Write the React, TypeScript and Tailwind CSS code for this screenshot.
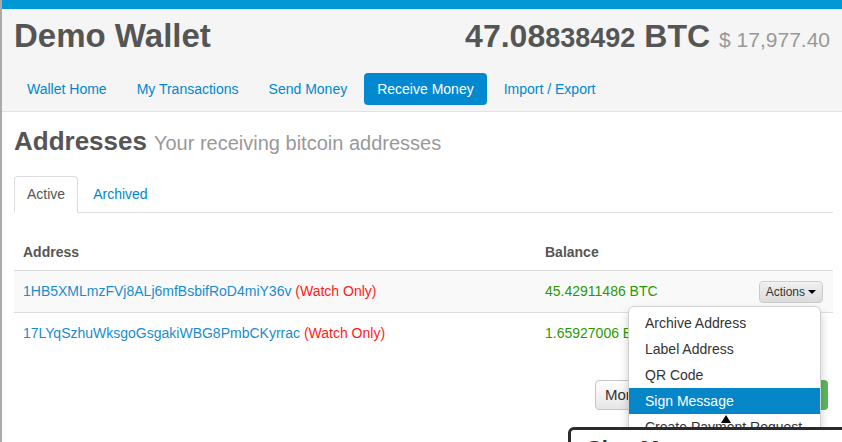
import { ReactNode } from "react";

const navItems = ["Wallet Home", "My Transactions", "Send Money", "Receive Money", "Import / Export"];

const addresses = [
  { addr: "1HB5XMLmzFVj8ALj6mfBsbifRoD4miY36v", balance: "45.42911486 BTC" },
  { addr: "17LYqSzhuWksgoGsgakiWBG8PmbCKyrrac", balance: "1.65927006 BTC" },
];

const menuItems = ["Archive Address", "Label Address", "QR Code", "Sign Message", "Create Payment Request"];

const Row = ({ striped, children }: { striped?: boolean; children: ReactNode }) => (
  <div
    className={`flex h-[42px] items-center border-t border-[#dddddd] ${striped ? "bg-[#f9f9f9]" : "bg-white"}`}
  >
    {children}
  </div>
);

export default function App() {
  return (
    <div
      className="relative h-[442px] w-full overflow-hidden border-l-2 border-[#aaaaaa] bg-white text-[14px] text-[#333333]"
      style={{ fontFamily: '"Liberation Sans", Arial, sans-serif' }}
    >
      {/* header */}
      <div className="border-t-[9px] border-b border-t-[#0099d5] border-b-[#e3e3e3] bg-[#f5f5f5] pl-3 pr-3 pb-[6px]">
        <div className="box-content flex h-[40px] items-baseline justify-between pt-[7px]">
          <h1 className="text-[33px] font-bold leading-[40px] text-[#555555]">Demo Wallet</h1>
          <div className="flex items-baseline leading-[40px] text-[#555555]">
            <span className="text-[32px] font-bold">47.08</span>
            <span className="text-[27px] font-bold">838492</span>
            <span className="ml-[9px] text-[32px] font-bold">BTC</span>
            <span className="ml-[9px] text-[21px] text-[#999999]">$ 17,977.40</span>
          </div>
        </div>
        <div className="mt-[17px] flex gap-[4px]">
          {navItems.map((n) => (
            <a
              key={n}
              className={`h-[32px] rounded-[4px] px-[13px] leading-[32px] ${
                n === "Receive Money" ? "bg-[#0389cf] text-white" : "text-[#0088cc]"
              }`}
            >
              {n}
            </a>
          ))}
        </div>
      </div>

      {/* body */}
      <div className="pl-3 pr-[9px]">
        <div className="mt-[12px] flex items-baseline leading-[34px]">
          <h2 className="text-[26px] font-bold text-[#555555]">Addresses</h2>
          <span className="ml-[7px] text-[20px] text-[#999999]">Your receiving bitcoin addresses</span>
        </div>

        <div className="mt-[16px] flex gap-[2px] border-b border-[#dddddd]">
          <div className="-mb-px rounded-t-[4px] border border-b-white border-[#dddddd] bg-white px-[12px] py-[7px] leading-[20px] text-[#555555]">
            Active
          </div>
          <div className="px-[13px] py-[8px] leading-[20px] text-[#0088cc]">Archived</div>
        </div>

        <div className="mt-[21px]">
          <div className="flex h-[36px] items-center font-bold text-[#555555]">
            <div className="w-[531px] pl-[9px]">Address</div>
            <div>Balance</div>
          </div>
          {addresses.map((a, i) => (
            <Row key={a.addr} striped={i === 0}>
              <div className="w-[531px] pl-[9px]">
                <span className="text-[#1a8ccd]">{a.addr}</span> <span className="text-[#ff1a1a]">(Watch Only)</span>
              </div>
              <div className="flex-1 text-[#2a9a00]">{a.balance}</div>
              {i === 0 && (
                <button className="mr-[10px] flex h-[22px] items-center gap-[3px] rounded-[4px] border border-[#cccccc] bg-gradient-to-b from-[#f0f0f0] to-[#dcdcdc] px-[6px] text-[12px] text-[#333333] shadow-[inset_0_1px_0_rgba(255,255,255,0.3)]">
                  Actions
                  <span className="h-0 w-0 border-x-[4px] border-t-[4px] border-x-transparent border-t-black" />
                </button>
              )}
            </Row>
          ))}
        </div>

        <div className="mt-[26px] flex justify-end gap-[4px] pr-[5px]">
          <button className="h-[30px] w-[110px] rounded-[4px] border border-[#c5c5c5] bg-gradient-to-b from-white to-[#e6e6e6] pl-[9px] text-left text-[15px] text-[#333333]">
            More
          </button>
          <button className="h-[30px] w-[119px] rounded-[4px] bg-[#5bb75b] text-[15px] text-white">New Address</button>
        </div>
      </div>

      {/* dropdown */}
      <div className="absolute left-[626px] top-[306px] w-[193px] rounded-[6px] border border-[#d0d0d0] bg-white pt-[3px] shadow-[0_5px_10px_rgba(0,0,0,0.2)]">
        {menuItems.map((m) => (
          <div
            key={m}
            className={`h-[26px] px-[16px] leading-[26px] ${
              m === "Sign Message" ? "bg-[#0586c9] text-white" : "text-[#333333]"
            }`}
          >
            {m}
          </div>
        ))}
      </div>

      {/* cursor */}
      <svg className="absolute left-[718px] top-[415px]" width="12" height="14" viewBox="0 0 12 14">
        <path d="M6 0 L11 8 L1 8 Z" fill="#000" />
      </svg>

      {/* modal */}
      <div className="absolute left-[566px] top-[427px] h-[80px] w-[320px] rounded-[6px] border-[3px] border-[#2b2b2b] bg-white px-[16px] pt-[4px]">
        <h3 className="text-[22px] font-bold leading-[30px] text-[#333333]">Sign Message</h3>
      </div>
    </div>
  );
}
